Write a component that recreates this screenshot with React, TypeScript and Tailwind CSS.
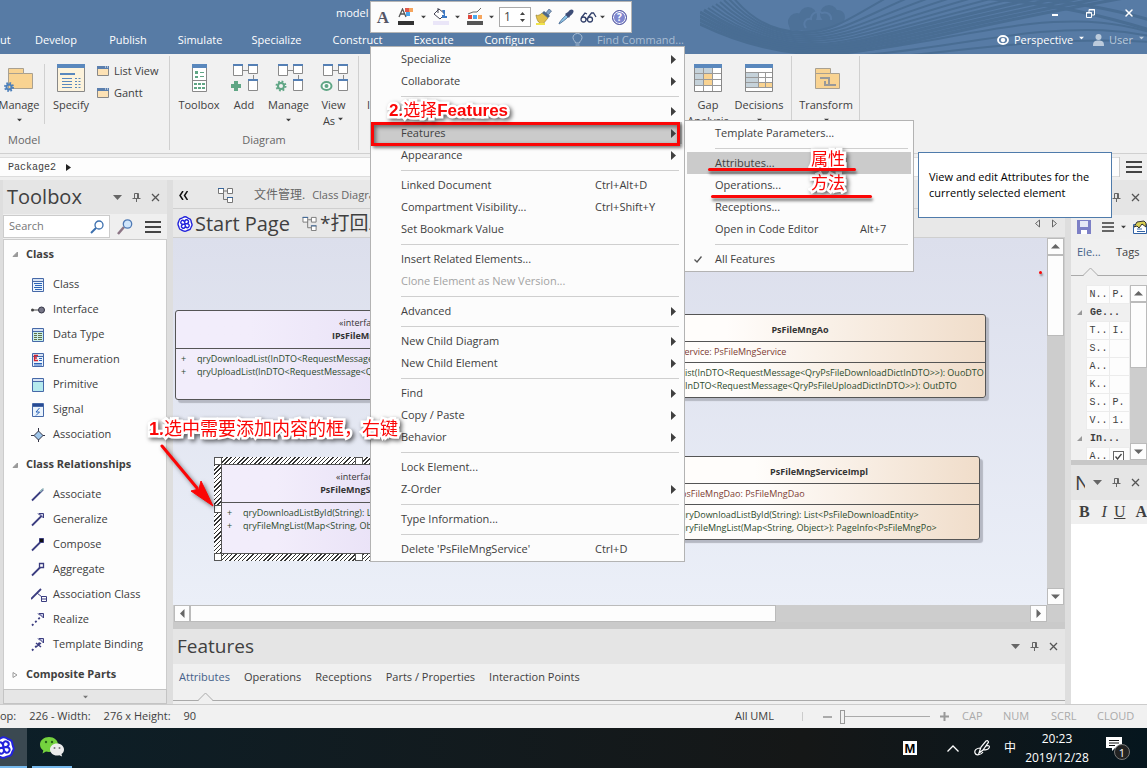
import type { ReactNode } from 'react';
import { X } from 'lucide-react';

type MenuEntry = { label: string; shortcut?: string; sub?: boolean; disabled?: boolean; active?: boolean; checked?: boolean } | 'sep';

const ribbonTabs = ['Develop', 'Publish', 'Simulate', 'Specialize', 'Construct', 'Execute', 'Configure'];

const contextMenu: MenuEntry[] = [
  { label: 'Specialize', sub: true },
  { label: 'Collaborate', sub: true },
  'sep',
  { label: '', sub: true },
  { label: 'Features', sub: true, active: true },
  { label: 'Appearance', sub: true },
  'sep',
  { label: 'Linked Document', shortcut: 'Ctrl+Alt+D' },
  { label: 'Compartment Visibility...', shortcut: 'Ctrl+Shift+Y' },
  { label: 'Set Bookmark Value' },
  'sep',
  { label: 'Insert Related Elements...' },
  { label: 'Clone Element as New Version...', disabled: true },
  'sep',
  { label: 'Advanced', sub: true },
  'sep',
  { label: 'New Child Diagram', sub: true },
  { label: 'New Child Element', sub: true },
  'sep',
  { label: 'Find', sub: true },
  { label: 'Copy / Paste', sub: true },
  { label: 'Behavior', sub: true },
  'sep',
  { label: 'Lock Element...' },
  { label: 'Z-Order', sub: true },
  'sep',
  { label: 'Type Information...' },
  'sep',
  { label: "Delete 'PsFileMngService'", shortcut: 'Ctrl+D' },
];

const featuresMenu: MenuEntry[] = [
  { label: 'Template Parameters...' },
  'sep',
  { label: 'Attributes...', active: true },
  { label: 'Operations...' },
  { label: 'Receptions...' },
  { label: 'Open in Code Editor', shortcut: 'Alt+7' },
  'sep',
  { label: 'All Features', checked: true },
];

const classItems = ['Class', 'Interface', 'Data Type', 'Enumeration', 'Primitive', 'Signal', 'Association'];
const relationItems = ['Associate', 'Generalize', 'Compose', 'Aggregate', 'Association Class', 'Realize', 'Template Binding'];
const featureTabs = ['Attributes', 'Operations', 'Receptions', 'Parts / Properties', 'Interaction Points'];

const propertyRows: Array<{ name: string; value?: string; group?: boolean; check?: boolean }> = [
  { name: 'N..', value: 'P.' },
  { name: 'Ge...', group: true },
  { name: 'T..', value: 'I.' },
  { name: 'S..' },
  { name: 'A..' },
  { name: 'K..' },
  { name: 'S..', value: 'P.' },
  { name: 'V..', value: '1.' },
  { name: 'In...', group: true },
  { name: 'A..', check: true },
];

function Caret({ className = '' }: { className?: string }) {
  return (
    <svg className={`h-[4px] w-[7px] shrink-0 ${className}`} viewBox="0 0 7 4" fill="currentColor">
      <path d="M0 0h7L3.5 4z" />
    </svg>
  );
}

function Burger() {
  return (
    <svg className="h-[12px] w-[16px]" viewBox="0 0 16 12" fill="#444">
      <path d="M0 0h16v2H0zM0 5h16v2H0zM0 10h16v2H0z" />
    </svg>
  );
}

function PanelButtons({ caret = true }: { caret?: boolean }) {
  return (
    <div className="flex items-center gap-[10px] text-[#555]">
      {caret && (
        <button type="button" aria-label="Panel options">
          <svg className="h-[5px] w-[9px]" viewBox="0 0 9 5" fill="#666">
            <path d="M0 0h9L4.5 5z" />
          </svg>
        </button>
      )}
      <button type="button" aria-label="Pin">
        <svg className="h-[9px] w-[9px]" viewBox="0 0 9 9" fill="none" stroke="#666">
          <path d="M2.5 5V.5h4V5M5.5.5V5M.5 5.5h8M4.5 6v3" />
        </svg>
      </button>
      <button type="button" aria-label="Close">
        <svg className="h-[9px] w-[9px]" viewBox="0 0 9 9" stroke="#555" strokeWidth="1.3">
          <path d="M1 1l7 7M8 1L1 8" />
        </svg>
      </button>
    </div>
  );
}

function Swirl() {
  const lines = Array.from({ length: 12 }, (_, i) => i);
  return (
    <svg className="pointer-events-none absolute right-0 top-0 h-[54px] w-[447px]" viewBox="700 0 447 54" fill="none" stroke="#496d93">
      <g fill="#4d7198" stroke="none">
        <circle cx="797" cy="22" r="9" />
        <circle cx="808" cy="16" r="9" />
        <circle cx="829" cy="14" r="9" />
        <path d="M788 20h40l14 0-10 8-20 3-22-1z" />
        <circle cx="838" cy="17" r="7" />
      </g>
      <path d="M806 28c-4-5 0-10 5-9 0-6 7-9 11-6 5-2 10 2 9 7" stroke="#577ba5" strokeWidth="2" />
      {lines.map((i) => (
        <path
          key={i}
          strokeWidth={i < 7 ? 2 : 3}
          d={`M${732 - i * 4} ${-4 + i * 2} C${748 - i * 2} ${16 + i * 2}, ${770} ${32 + i * 2}, ${802 + i * 2} ${32 + i * 2} S${850 + i * 9} ${18 + i}, ${888 + i * 22} -3`}
        />
      ))}
      <path strokeWidth="3" d="M975 -2c50 2 110 12 175 32M1020 -2c40 2 90 10 130 22" />
      <path strokeWidth="2" d="M820 54c70-2 150-24 210-30s90 0 120 8M850 56c70-4 140-20 190-24s80-2 110 4M900 56c70-6 150-20 250-14" />
    </svg>
  );
}

function DiagramIcon({ tool }: { tool?: 'add' | 'gear' | 'eye' }) {
  return (
    <svg className="h-[28px] w-[28px]" viewBox="0 0 28 28" fill="#fff" stroke="#8a8a8a">
      <path d="M12 6.5h6M23.5 11v5" fill="none" />
      <path d="M3.5 1.5h9v10h-9zM18.5 1.5h9v8h-9zM18.5 16.5h9v10h-9z" />
      <path d="M3 1h10M18 1h10M18 16h10" stroke="#5580b5" strokeWidth="2" />
      {tool === 'add' && <path d="M4 17h4v3h3v4H8v3H4v-3H1v-4h3z" fill="#60a685" stroke="none" />}
      {tool === 'gear' && (
        <>
          <circle cx="6" cy="22" r="3" fill="none" stroke="#60a685" strokeWidth="2" />
          <circle cx="6" cy="22" r="4.5" fill="none" stroke="#60a685" strokeWidth="2" strokeDasharray="1.8 1.73" />
        </>
      )}
      {tool === 'eye' && (
        <>
          <ellipse cx="6.5" cy="22" rx="5" ry="4" stroke="#60a685" strokeWidth="2" />
          <circle cx="6.5" cy="22" r="2" fill="#60a685" stroke="none" />
        </>
      )}
    </svg>
  );
}

function SmallDiagramIcon({ className }: { className: string }) {
  return (
    <svg className={className} viewBox="0 0 16 16" fill="#fff" stroke="#777">
      <path d="M6 4h4M5.5 6v6.5h5" fill="none" />
      <path d="M.5 1.5h5v5h-5zM9.5 1.5h5v5h-5zM9.5 10.500h5v5h-5z" />
      <path d="M0 1.5h6M9 10.500h6" stroke="#38659b" />
    </svg>
  );
}

function FolderIcon({ gear }: { gear?: boolean }) {
  return (
    <svg className="h-[28px] w-[30px]" viewBox="0 0 30 28" fill="#f9d391" stroke="#a9a090">
      <path d="M4.5 4.5h15v5h9v15h-24z" />
      <path d="M4.5 9.5h15" />
      {gear ? (
        <>
          <circle cx="5" cy="23" r="2.5" fill="none" stroke="#4d80bb" strokeWidth="2" />
          <circle cx="5" cy="23" r="4" fill="none" stroke="#4d80bb" strokeWidth="2" strokeDasharray="1.6 1.54" />
        </>
      ) : (
        <path d="M9 14h9v7h7M14 17v4h4M9 14v0" fill="none" stroke="#999" strokeWidth="2" />
      )}
    </svg>
  );
}

function SpecifyIcon() {
  return (
    <svg className="h-[28px] w-[28px]" viewBox="0 0 28 28">
      <path d="M.5.5h27v27H.5z" fill="#fdf3dc" stroke="#888" />
      <path d="M0 0h28v4H0z" fill="#5a88bd" />
      <path d="M3 10h15" stroke="#5a88bd" strokeWidth="2" />
      <path d="M5 14.5h10M5 17.5h10M5 20.5h10M5 23.5h10" stroke="#5a88bd" />
      <path d="M18 14.5h6M18 17.5h6M18 20.5h6M18 23.5h6" stroke="#5a88bd" strokeDasharray="2 1.5" />
    </svg>
  );
}

function ToolboxIcon() {
  return (
    <svg className="h-[28px] w-[15px]" viewBox="0 0 15 28">
      <path d="M.5.5h14v27H.5z" fill="#fff" stroke="#888" />
      <path d="M0 0h15v4H0z" fill="#5a88bd" />
      <path d="M0 16.5h15" stroke="#888" />
      <path d="M3 7h3v3H3zM3 12h3v2H3zM8 8h4v1H8zM8 12h4v1H8zM2 19h3v2H2zM6 19h3v2H6zM10 19h3v2h-3zM2 23h3v2H2zM6 23h3v2H6zM10 23h3v2h-3z" fill="#60a685" />
    </svg>
  );
}

function TableIcon({ decisions }: { decisions?: boolean }) {
  return (
    <svg className="h-[28px] w-[28px]" viewBox="0 0 28 28">
      <path d="M.5.5h27v27H.5z" fill="#fff" />
      {decisions ? (
        <path d="M1 9h13v14H1z" fill="#c5d2da" />
      ) : (
        <path d="M1 4h17v5H1zM1 9h9v12H1z" fill="#c5d2da" />
      )}
      <path d={decisions ? 'M14 18h13v5H14z' : 'M10 10h9v11h-9z'} fill="#f9d391" />
      <path
        d={decisions ? 'M0 8.5h28M0 13.5h28M0 18.5h28M0 23.5h28M13.5 9v14M20.5 9v14' : 'M0 9.5h28M0 15.5h28M0 21.5h28M9.5 4v24M18.5 4v24'}
        stroke="#999"
      />
      <path d="M.5.5h27v27H.5z" fill="none" stroke="#888" />
      <path d="M0 0h28v4H0z" fill="#5a88bd" />
    </svg>
  );
}

function SheetIcon() {
  return (
    <svg className="h-[10px] w-[12px]" viewBox="0 0 12 10">
      <path d="M.5.5h11v9H.5z" fill="#fde2b5" stroke="#888" />
      <path d="M0 0h12v3H0z" fill="#5b7fae" />
      <path d="M8 1h1M10 1h1" stroke="#fff" />
    </svg>
  );
}

function RibbonButton({ icon, label, second, caret, className }: { icon: ReactNode; label: string; second?: string; caret?: boolean; className: string }) {
  return (
    <button type="button" className={`flex shrink-0 flex-col items-center ${className}`}>
      <span className="flex h-[30px] items-start">{icon}</span>
      <span className="mt-[3px] leading-[16px]">{label}</span>
      <span className="flex h-[16px] items-center gap-[2px] leading-[16px]">
        {second}
        {caret && <Caret className={second ? 'mb-[4px] scale-75' : 'mb-[2px] scale-75'} />}
      </span>
    </button>
  );
}

function MiniToolbar() {
  return (
    <div className="absolute left-[370px] top-[1px] flex h-[32px] w-[262px] items-center border border-[#b5b5b5] bg-[#fcfcfc] pl-[2px] text-[#444]">
      <button type="button" className="w-[20px] font-['Liberation_Serif',serif] text-[17px] font-bold leading-none text-[#556]">A</button>
      <button type="button" aria-label="Font colour" className="ml-[5px]">
        <svg className="h-[18px] w-[17px]" viewBox="0 0 17 18">
          <path d="M1 9L4.5 1 8 9M2.500 6h4" fill="none" stroke="#555" strokeWidth="1.3" />
          <path d="M7 0h4v4H7z" fill="#e0584c" />
          <path d="M11 0h4v4h-4z" fill="#f6a55d" />
          <path d="M8 4h4v4H8z" fill="#4ba7ee" />
          <path d="M0 13h16v4H0z" fill="#333" />
        </svg>
      </button>
      <Caret className="ml-[5px] scale-75" />
      <button type="button" aria-label="Fill colour" className="ml-[6px]">
        <svg className="h-[18px] w-[17px]" viewBox="0 0 17 18">
          <path d="M6 1l6 5-5 5-6-5z" fill="#fff" stroke="#445" />
          <path d="M5 0v5" stroke="#445" />
          <path d="M9 2h3v6h2v2h-5V7h2z" fill="#3d79c4" />
          <path d="M0 13h16v4H0z" fill="#eae6f8" />
        </svg>
      </button>
      <Caret className="ml-[4px] scale-75" />
      <button type="button" aria-label="Line colour" className="ml-[6px]">
        <svg className="h-[18px] w-[17px]" viewBox="0 0 17 18">
          <path d="M1 6l5-2h4l4-4" fill="none" stroke="#666" />
          <path d="M1 7h4v4H1z" fill="#e0483c" />
          <path d="M6 7h4v4H6z" fill="#4ba7ee" />
          <path d="M11 7h4v4h-4z" fill="#f6a55d" />
          <path d="M0 13h16v4H0z" fill="#555" />
        </svg>
      </button>
      <Caret className="ml-[4px] scale-75" />
      <div className="ml-[4px] flex h-[20px] w-[32px] items-center border border-[#aaa] bg-white">
        <input aria-label="Line width" defaultValue="1" className="w-[19px] bg-transparent pl-[4px] text-[12px] outline-none" />
        <svg className="h-[12px] w-[7px]" viewBox="0 0 7 12" fill="#444">
          <path d="M1 4l2.500-3L6 4zM1 8l2.500 3L6 8z" />
        </svg>
      </div>
      <button type="button" aria-label="Copy style" className="ml-[4px]">
        <svg className="h-[16px] w-[17px]" viewBox="0 0 17 16">
          <path d="M10 5l4-5 2.500 2-4 5z" fill="#7fa0c4" stroke="#3d5478" strokeWidth=".6" />
          <path d="M1 6c2 1 4 0 6-2l6 5-5 6c-3 0-6-2-7-9z" fill="#e2c14b" stroke="#8f7a24" strokeWidth=".6" />
          <path d="M7 4l2-2 6 5-2 2z" fill="#4d6888" />
          <path d="M1 15h9" stroke="#efe34c" strokeWidth="2" />
        </svg>
      </button>
      <button type="button" aria-label="Pick style" className="ml-[6px]">
        <svg className="h-[16px] w-[16px]" viewBox="0 0 16 16">
          <path d="M1 15c0-2 6-8 7-9l2 2c-2 2-7 6-9 7z" fill="#8cc6e8" stroke="#57779e" />
          <path d="M7 5l4 4 1-2c4-3 4-5 3-6s-3-1-5 2z" fill="#3d4d77" />
        </svg>
      </button>
      <button type="button" aria-label="View options" className="ml-[6px]">
        <svg className="h-[12px] w-[17px]" viewBox="0 0 17 12" fill="none" stroke="#33416b" strokeWidth="1.3">
          <circle cx="3.5" cy="8.5" r="2.5" />
          <circle cx="10" cy="8.5" r="2.5" />
          <path d="M6 8h1.500M1.500 6.500L5 2l2 1M8 6.500L11.500 2h2L16 6" />
        </svg>
      </button>
      <Caret className="ml-[2px] scale-75" />
      <button type="button" aria-label="Help" className="ml-[6px] flex h-[15px] w-[15px] items-center justify-center rounded-full border border-[#4a4f9c] bg-[#7f87cf] text-[10px] font-bold leading-none text-white ring-1 ring-inset ring-white">
        ?
      </button>
    </div>
  );
}

function Menu({ items, className, shortcutCol }: { items: MenuEntry[]; className: string; shortcutCol: string }) {
  return (
    <div className={`absolute border border-[#b3b3b3] bg-[#fcfcfc] py-[1px] text-[#404040] ${className}`}>
      {items.map((item, i) =>
        item === 'sep' ? (
          <div key={i} className="flex h-[8px] items-center pl-[30px] pr-[5px]">
            <div className="h-px flex-1 bg-[#cfcfcf]" />
          </div>
        ) : (
          <button
            key={i}
            type="button"
            aria-label={item.label || 'Submenu'}
            disabled={item.disabled}
            className={`mx-[2px] flex h-[22px] w-[calc(100%-4px)] items-center pr-[4px] text-left ${item.active ? 'bg-[#cbcbcb]' : ''} ${item.disabled ? 'text-[#a3a3a3]' : ''}`}
          >
            <span className="flex w-[28px] shrink-0 pl-[7px]">
              {item.checked && (
                <svg className="h-[7px] w-[8px]" viewBox="0 0 8 7" fill="none" stroke="#555" strokeWidth="1.3">
                  <path d="M.5 3.500L3 6l4.500-5.500" />
                </svg>
              )}
            </span>
            <span className="flex-1 whitespace-nowrap">{item.label}</span>
            {item.shortcut && <span className={shortcutCol}>{item.shortcut}</span>}
            {item.sub && (
              <svg className="mr-[2px] h-[9px] w-[5px]" viewBox="0 0 5 9" fill="#404040">
                <path d="M0 0l5 4.500L0 9z" />
              </svg>
            )}
          </button>
        ),
      )}
    </div>
  );
}

function ClassIcon({ name }: { name: string }) {
  if (name === 'Interface') {
    return (
      <svg className="h-[14px] w-[14px]" viewBox="0 0 14 14">
        <circle cx="1.5" cy="7" r="1.500" fill="#444" />
        <path d="M2 7h6" stroke="#444" />
        <circle cx="10.5" cy="7" r="3" fill="#778" stroke="#334" />
      </svg>
    );
  }
  if (name === 'Association') {
    return (
      <svg className="h-[14px] w-[14px]" viewBox="0 0 14 14">
        <path d="M0 7.500h14M7.500 0v14" stroke="#334" />
        <path d="M7.500 3L12 7.500 7.500 12 3 7.500z" fill="#9fc6ea" stroke="#334" />
      </svg>
    );
  }
  const fill = name === 'Primitive' ? '#b5eaee' : name === 'Data Type' ? '#c9efe9' : '#eaf3fc';
  return (
    <svg className="h-[14px] w-[14px]" viewBox="0 0 14 14">
      <path d="M1.500.5h11v13h-11z" fill={fill} stroke="#4669a8" />
      <path d="M2 1h10v2H2z" fill={name === 'Signal' ? '#274a94' : '#d7e3f4'} />
      <path d="M2 3.500h10" stroke="#4669a8" />
      {name === 'Class' && <path d="M3 5.500h8M4 7.500h7M3 9.500h8M4 11.500h7" stroke="#2c64b8" />}
      {name === 'Data Type' && <path d="M3 5.500h3M7 5.500h4M3 7.500h3M7 7.500h4M3 9.500h3M7 9.500h4M3 11.500h3M7 11.500h4" stroke="#5f7048" />}
      {name === 'Enumeration' && (
        <>
          <path d="M7 2.500H3.500v5H7M3.500 5H6" fill="none" stroke="#d2232f" strokeWidth="1.3" />
          <path d="M8 5.500h3M8 7.500h3M3 10.500h8M3 12h8" stroke="#2c64b8" />
        </>
      )}
      {name === 'Signal' && <path d="M8.500 5L5 9h3.500L5 12.500" fill="none" stroke="#2c64b8" />}
    </svg>
  );
}

function RelationIcon({ name }: { name: string }) {
  const dashed = name === 'Realize' || name === 'Template Binding';
  return (
    <svg className="h-[15px] w-[16px]" viewBox="0 0 16 15" fill="none" stroke="#3b3d80">
      <path d={name === 'Association Class' ? 'M0 12L10 2' : 'M1 13.500L12 2.500'} strokeWidth="1.8" strokeDasharray={dashed ? '2 2.500' : undefined} />
      {(name === 'Generalize' || dashed) && <path d="M8 1.500h4.500V6zM7 1.500l2 2" fill="#c9cbe6" />}
      {name === 'Compose' && <path d="M8.500 1.500h4v4h-4z" fill="#111" />}
      {name === 'Aggregate' && <path d="M8.500 1.500h4v4h-4z" fill="#fff" strokeWidth="1.3" />}
      {name === 'Associate' && <path d="M9 5l3.500-3.500" stroke="#8db4b8" strokeWidth="1.5" />}
      {name === 'Association Class' && <path d="M6 6l5 4M10.500 9.500h5v5h-5zM11 12h4" />}
      {name === 'Template Binding' && <path d="M5 6l5 4M10 6l-5 4" strokeWidth="1.5" />}
    </svg>
  );
}

function ToolGroup({ title, items, headerClass }: { title: string; items: string[]; headerClass: string }) {
  return (
    <section>
      <h3 className={`flex items-center pl-[8px] font-bold ${headerClass}`}>
        <svg className="mr-[8px] h-[6px] w-[6px]" viewBox="0 0 6 6" fill={items.length ? '#999' : 'none'} stroke="#999">
          <path d={items.length ? 'M5.500 1v4.500H1z' : 'M1 .5L5 3 1 5.500z'} />
        </svg>
        {title}
      </h3>
      <ul>
        {items.map((item) => (
          <li key={item}>
            <button type="button" className="flex h-[25px] w-full items-center pl-[27px] text-left">
              <span className="flex w-[22px] shrink-0">{title === 'Class' ? <ClassIcon name={item} /> : <RelationIcon name={item} />}</span>
              {item}
            </button>
          </li>
        ))}
      </ul>
    </section>
  );
}

function Toolbox() {
  return (
    <aside className="flex w-[164px] shrink-0 flex-col bg-[#e5e5e5]">
      <header className="flex h-[34px] items-center justify-between pl-[4px] pr-[7px]">
        <h2 className="text-[20px] leading-none">Toolbox</h2>
        <PanelButtons />
      </header>
      <div className="flex h-[25px] items-center bg-[#efefef]">
        <label className="flex h-[23px] w-[107px] items-center border border-[#ccc] bg-white px-[5px]">
          <input type="search" aria-label="Search tools" placeholder="Search" className="w-0 flex-1 bg-transparent outline-none placeholder:text-[#777]" />
          <svg className="h-[14px] w-[14px]" viewBox="0 0 14 14" fill="none" stroke="#3c6fae">
            <circle cx="9" cy="5" r="4" strokeWidth="1.3" />
            <path d="M6 8l-5 5" strokeWidth="2" />
          </svg>
        </label>
        <button type="button" aria-label="Find toolbox item" className="ml-[7px]">
          <svg className="h-[16px] w-[16px]" viewBox="0 0 16 16" fill="none">
            <path d="M7 8l-6 7" stroke="#8c7585" strokeWidth="2.5" />
            <circle cx="10.5" cy="5" r="4.2" fill="#cfe5fb" stroke="#4f7ab5" strokeWidth="1.3" />
          </svg>
        </button>
        <button type="button" aria-label="Toolbox menu" className="ml-[12px]"><Burger /></button>
      </div>
      <div className="flex-1 border-x border-t border-[#ccc] bg-[#fdfdfd]">
        <ToolGroup title="Class" items={classItems} headerClass="h-[32px] pb-[4px]" />
        <ToolGroup title="Class Relationships" items={relationItems} headerClass="h-[35px]" />
        <ToolGroup title="Composite Parts" items={[]} headerClass="h-[32px] pt-[3px]" />
      </div>
      <button type="button" aria-label="Scroll down" className="flex h-[15px] items-center justify-center border border-[#c4c4c4] bg-[#e6e6e6] text-[#777]">
        <Caret className="scale-75" />
      </button>
    </aside>
  );
}

function InterfaceNode({ name, ops, className }: { name: string; ops: string[]; className: string }) {
  return (
    <div className={`absolute h-[90px] overflow-hidden border border-[#555] bg-gradient-to-r from-[#f2edfb] from-20% to-[#e0d6f2] text-[9px] leading-[13px] text-[#333] ${className}`}>
      <div className="flex h-[38px] flex-col items-center justify-end border-b border-[#555] pb-[6px]">
        <span>«interface»</span>
        <span className="font-bold">{name}</span>
      </div>
      <div className="pt-[3px] text-[#2c4a2c]">
        {ops.map((op) => (
          <div key={op} className="flex whitespace-nowrap">
            <span className="w-[21px] shrink-0 pl-[5px]">+</span>
            {op}
          </div>
        ))}
      </div>
    </div>
  );
}

function ClassNode({ name, attr, ops, className, opsClass }: { name: string; attr: string; ops: string[]; className: string; opsClass: string }) {
  return (
    <div className={`absolute h-[84px] rounded-[3px] border border-[#555] bg-gradient-to-r from-[#fffdfb] from-30% to-[#f0ddca] text-[9px] leading-[13px] shadow-[3px_3px_1px_#b5b8c3] ${className}`}>
      <div className="flex h-[27px] items-center justify-center border-b border-[#555] pt-[2px] font-bold text-[#333]">{name}</div>
      <div className="flex h-[21px] items-center whitespace-nowrap border-b border-[#555] pb-[2px] pl-[22px] text-[#7d3c33]">{attr}</div>
      <div className={`whitespace-nowrap pt-[3px] text-[#2c4a2c] ${opsClass}`}>
        {ops.map((op) => (
          <div key={op}>{op}</div>
        ))}
      </div>
    </div>
  );
}

function ScrollButton({ d, label, className }: { d: string; label: string; className: string }) {
  return (
    <button type="button" aria-label={label} className={`flex shrink-0 items-center justify-center border border-[#bbb] bg-[#fdfdfd] ${className}`}>
      <svg className="h-[9px] w-[9px]" viewBox="0 0 9 9" fill="#666">
        <path d={d} />
      </svg>
    </button>
  );
}

function SpiralLogo({ className }: { className: string }) {
  return (
    <svg className={className} viewBox="0 0 16 16" fill="#fff" stroke="#2222dc" strokeWidth="1.4">
      <path d="M8 .8c2 0 2.500 1.200 3.500 1.500s2.300.7 2.500 2.200.2 1.800.9 3.500-.7 2.300-.9 3.500-1 2.300-2.500 2.500-1.800 1.200-3.500 1.200-2.300-.9-3.500-1.200S2.200 13 2 11.500 1 9.500 1 8s.8-2.300 1-3.500S3 2.600 4.500 2.300 6.300.8 8 .8z" />
      <path d="M8 8C5 9 3 7.500 4 5.500S8 4 8 8zM8 8c-1-3 .5-5 2.500-4S12 8 8 8zM8 8c3-1 5 .5 4 2.500S8 12 8 8zM8 8c1 3-.5 5-2.500 4S4 8 8 8z" fill="none" />
    </svg>
  );
}

function Handle({ className }: { className: string }) {
  return <span className={`absolute h-[8px] w-[8px] border border-[#555] bg-white ${className}`} />;
}

function DiagramArea() {
  return (
    <main className="flex min-w-0 flex-1 flex-col">
      <div className="flex h-[28px] items-center bg-[#e8e8e8] pl-[6px] pt-[2px] text-[#666]">
        <svg className="h-[9px] w-[9px]" viewBox="0 0 9 9" fill="none" stroke="#111" strokeWidth="1.5">
          <path d="M4 0L1 4.500 4 9M8.500 0l-3 4.500 3 4.500" />
        </svg>
        <SmallDiagramIcon className="ml-[30px] h-[16px] w-[16px]" />
        <span className="ml-[20px] whitespace-nowrap text-[12px]">文件管理.</span>
        <span className="ml-[7px] whitespace-nowrap">Class Diagram</span>
      </div>
      <div className="flex h-[30px] items-center border-y border-[#cfcfcf] bg-[#e8e8e8] pl-[4px] pr-[7px] pt-[1px]">
        <SpiralLogo className="h-[16px] w-[16px] shrink-0" />
        <span className="ml-[2px] whitespace-nowrap text-[20px] leading-none">Start Page</span>
        <SmallDiagramIcon className="ml-[12px] h-[15px] w-[16px] shrink-0" />
        <span className="ml-[2px] flex-1 whitespace-nowrap text-[19px] leading-none">*打回工</span>
        <svg className="h-[9px] w-[24px]" viewBox="0 0 24 9" fill="none" stroke="#666">
          <path d="M5.500 1v7L1.500 4.500zM18.500 1v7l4-3.500z" />
        </svg>
      </div>
      <div className="flex flex-1">
        <div className="relative flex-1 overflow-hidden bg-gradient-to-b from-[#dcdfec] to-[#ebeff8]">
          <InterfaceNode
            className="left-[2px] top-[72px] w-[374px] rounded-[3px] shadow-[3px_3px_1px_#b5b8c3]"
            name="IPsFileMngAo"
            ops={['qryDownloadList(InDTO<RequestMessage<QryPsFileDownloadDictInDTO>>)', 'qryUploadList(InDTO<RequestMessage<QryPsFileUploadDictInDTO>>)']}
          />
          <div className="absolute left-[41px] top-[219px] h-[104px] w-[290px] bg-[repeating-linear-gradient(135deg,#333_0_1px,#fff_1px_3px)]">
            <InterfaceNode
              className="left-[7px] top-[7px] w-[276px]"
              name="PsFileMngService"
              ops={['qryDownloadListById(String): List<PsFileDownloadEntity>', 'qryFileMngList(Map<String, Object>): PageInfo<PsFileMngPo>']}
            />
            <Handle className="left-0 top-0" />
            <Handle className="left-[141px] top-0" />
            <Handle className="left-0 top-[48px]" />
            <Handle className="bottom-0 left-0" />
            <Handle className="bottom-0 left-[141px]" />
          </div>
          <ClassNode
            className="left-[441px] top-[76px] w-[372px]"
            opsClass="pl-[9px]"
            name="PsFileMngAo"
            attr="psFileMngService: PsFileMngService"
            ops={['qryDownloadList(InDTO<RequestMessage<QryPsFileDownloadDictInDTO>>): OuoDTO', 'qryUploadList(InDTO<RequestMessage<QryPsFileUploadDictInDTO>>): OutDTO']}
          />
          <ClassNode
            className="left-[485px] top-[218px] w-[322px]"
            opsClass="pl-[21px]"
            name="PsFileMngServiceImpl"
            attr="psFileMngDao: PsFileMngDao"
            ops={['qryDownloadListById(String): List<PsFileDownloadEntity>', 'qryFileMngList(Map<String, Object>): PageInfo<PsFileMngPo>']}
          />
        </div>
        <div className="flex w-[18px] shrink-0 flex-col bg-[#cdcdcd] pr-px">
          <ScrollButton label="Scroll up" className="h-[17px]" d="M0 6.500L4.500 2 9 6.500z" />
          <div className="h-[81px] border border-[#bbb] bg-[#fdfdfd]" />
          <div className="flex-1" />
          <ScrollButton label="Scroll down" className="h-[17px]" d="M0 2.500h9L4.500 7z" />
        </div>
      </div>
      <div className="flex h-[17px] bg-[#cdcdcd] pl-px pr-[18px]">
        <ScrollButton label="Scroll left" className="w-[16px]" d="M6.500 0v9L2 4.500z" />
        <div className="w-[586px] border border-[#bbb] bg-[#fdfdfd]" />
        <div className="flex-1" />
        <ScrollButton label="Scroll right" className="w-[17px]" d="M2.500 0v9L7 4.500z" />
      </div>
      <div className="h-[7px] bg-[#cacaca]" />
      <section className="bg-[#f0f0f0]">
        <header className="flex h-[35px] items-center justify-between bg-[#e5e5e5] pl-[4px] pr-[7px]">
          <h2 className="text-[19px] leading-none">Features</h2>
          <PanelButtons />
        </header>
        <nav className="relative flex h-[37px] gap-[14px] border-b border-[#aaa] pl-[6px] pt-[5px]">
          {featureTabs.map((tab, i) => (
            <button key={tab} type="button" className={`h-[16px] whitespace-nowrap ${i === 0 ? 'text-[#44618a]' : ''}`}>
              {tab}
            </button>
          ))}
          <TabNotch className="left-[24px]" />
        </nav>
        <div className="h-[3px]" />
      </section>
    </main>
  );
}

function TabNotch({ className }: { className: string }) {
  return (
    <svg className={`absolute -bottom-px h-[9px] w-[17px] ${className}`} viewBox="0 0 17 9" fill="#f0f0f0" stroke="#aaa">
      <path d="M0 8.500h1L8.500 1 16 8.500h1" />
      <path d="M2 8.500h13" stroke="#f0f0f0" />
    </svg>
  );
}

function PropertiesPanel() {
  return (
    <aside className="flex w-[76px] shrink-0 flex-col overflow-hidden bg-white">
      <header className="flex h-[35px] items-center justify-end bg-[#e5e5e5] pr-[7px]">
        <PanelButtons caret={false} />
      </header>
      <div className="flex h-[24px] items-center bg-[#efefef] pl-[6px]">
        <svg className="h-[14px] w-[14px] shrink-0" viewBox="0 0 14 14">
          <path d="M0 0h14v14H0z" fill="#7d80c6" />
          <path d="M3 1h8v6H3z" fill="#e6e8f6" />
          <path d="M4 10h6v4H4z" fill="#fff" />
        </svg>
        <svg className="ml-[11px] h-[11px] w-[12px] shrink-0" viewBox="0 0 12 11" fill="#666">
          <path d="M0 0h12v2H0zM0 4h12v2H0zM0 8h12v2H0z" />
        </svg>
        <Caret className="ml-[6px] shrink-0 scale-75" />
        <svg className="ml-[6px] h-[14px] w-[14px] shrink-0" viewBox="0 0 14 14">
          <path d="M.5 4.500h13v9H.5z" fill="#fff" stroke="#3363a5" />
          <path d="M4 9h5M4 11.500h8" stroke="#3363a5" />
          <path d="M1 7L4 2l7-1 2 2v4L9 4 6 8 4 6z" fill="#d8ce52" stroke="#333" />
        </svg>
      </div>
      <div className="relative flex h-[37px] gap-[14px] border-b border-[#aaa] bg-[#f0f0f0] pl-[6px] pt-[5px]">
        <button type="button" className="h-[16px] w-[25px] text-left text-[#44618a]">Ele...</button>
        <button type="button" className="h-[16px]">Tags</button>
        <TabNotch className="left-[11px]" />
      </div>
      <div className="flex h-[184px] overflow-hidden bg-[#f0f0f0] pt-[9px]">
        <table className="w-[59px] shrink-0 table-fixed border-collapse self-start font-['Liberation_Mono',monospace] text-[10px]">
          <tbody>
            {propertyRows.map((row, i) => (
              <tr key={i} className="h-[18px]">
                <td className="w-[15px] p-0">
                  {row.group && (
                    <svg className="ml-[6px] h-[5px] w-[5px]" viewBox="0 0 5 5" fill="#999">
                      <path d="M5 0v5H0z" />
                    </svg>
                  )}
                </td>
                {row.group ? (
                  <td colSpan={2} className="p-0 pl-[4px] font-bold">{row.name}</td>
                ) : (
                  <>
                    <td className="w-[23px] border border-[#ececec] bg-[#fdfdfd] p-0 pl-[3px]">{row.name}</td>
                    <td className="border border-[#ececec] bg-[#fdfdfd] p-0 pl-[3px]">
                      {row.check ? (
                        <span className="relative block h-[11px] w-[11px]">
                          <input type="checkbox" aria-label="Active" defaultChecked className="block h-[11px] w-[11px] appearance-none border border-[#666] bg-white" />
                          <svg className="pointer-events-none absolute inset-0 h-[11px] w-[11px]" viewBox="0 0 11 11" fill="none" stroke="#444" strokeWidth="1.3">
                            <path d="M2.500 5.500l2 2.500 4-5" />
                          </svg>
                        </span>
                      ) : (
                        row.value
                      )}
                    </td>
                  </>
                )}
              </tr>
            ))}
          </tbody>
        </table>
        <div className="flex w-[17px] shrink-0 flex-col bg-[#cdcdcd]">
          <ScrollButton label="Scroll up" className="h-[17px]" d="M0 6.500L4.500 2 9 6.500z" />
          <div className="h-[66px] border border-[#bbb] bg-[#fdfdfd]" />
          <div className="flex-1" />
          <ScrollButton label="Scroll down" className="h-[17px]" d="M0 2.500h9L4.500 7z" />
        </div>
      </div>
      <div className="h-[5px] shrink-0 bg-[#c8c8c8]" />
      <header className="flex h-[35px] shrink-0 items-center justify-between bg-[#e5e5e5] pl-[4px] pr-[7px]">
        <h2 className="w-[10px] overflow-hidden text-[20px] leading-none">N</h2>
        <PanelButtons />
      </header>
      <div className="flex h-[24px] shrink-0 items-center bg-[#efefef] font-['Liberation_Serif',serif] text-[16px]">
        <button type="button" className="ml-[8px] w-[24px] text-left font-bold">B</button>
        <button type="button" className="w-[18px] pl-[3px] text-left italic">I</button>
        <button type="button" className="underline">U</button>
        <button type="button" className="ml-[10px] font-bold">A</button>
      </div>
    </aside>
  );
}

function StatusBar() {
  return (
    <footer className="flex h-[24px] items-center border-t border-[#ccc] bg-[#f1f1f1]">
      <div className="flex flex-1 gap-[13px] whitespace-nowrap">
        <span>op:</span>
        <span>226 - Width:</span>
        <span>276 x Height:</span>
        <span>90</span>
      </div>
      <span className="mr-[28px]">All UML</span>
      <span className="mr-[20px] h-[9px] w-px bg-[#ccc]" />
      <button type="button" aria-label="Zoom out" className="mr-[8px] h-[2px] w-[9px] bg-[#aaa]" />
      <input
        type="range"
        aria-label="Zoom"
        defaultValue="0"
        className="h-[14px] w-[90px] appearance-none bg-[linear-gradient(#aaa,#aaa)] bg-[length:100%_1px] bg-center bg-no-repeat [&::-webkit-slider-thumb]:h-[14px] [&::-webkit-slider-thumb]:w-[5px] [&::-webkit-slider-thumb]:appearance-none [&::-webkit-slider-thumb]:border [&::-webkit-slider-thumb]:border-[#999] [&::-webkit-slider-thumb]:bg-[#f1f1f1]"
      />
      <button type="button" aria-label="Zoom in" className="ml-[10px]">
        <svg className="h-[9px] w-[9px]" viewBox="0 0 9 9" stroke="#999" strokeWidth="2">
          <path d="M0 4.500h9M4.500 0v9" />
        </svg>
      </button>
      <div className="ml-[13px] flex text-[#aaa]">
        <span className="w-[41px]">CAP</span>
        <span className="w-[48px]">NUM</span>
        <span className="w-[46px]">SCRL</span>
        <span className="w-[50px]">CLOUD</span>
      </div>
    </footer>
  );
}

function Taskbar() {
  return (
    <div className="flex h-[40px] items-center bg-gradient-to-r from-[#0c1f28] via-[#151717] via-70% to-[#06161e] text-[12px] text-white">
      <button type="button" aria-label="Enterprise Architect" className="flex h-full w-[27px] items-center overflow-hidden border-b-2 border-[#76b9ed] bg-[#3b4951]">
        <SpiralLogo className="-ml-[8px] h-[23px] w-[23px] shrink-0" />
      </button>
      <button type="button" aria-label="WeChat" className="ml-[5px] flex h-full w-[40px] items-center justify-center border-b-2 border-[#76b9ed]">
        <svg className="h-[20px] w-[24px]" viewBox="0 0 24 20">
          <path d="M9 0c5 0 9 3.300 9 7.500S14 15 9 15c-1 0-2-.2-3-.5L2.500 16.500l.8-3C1.300 12 0 10 0 7.500 0 3.300 4 0 9 0z" fill="#74d23e" />
          <path d="M17 6.500c4 0 7 2.700 7 6 0 2-1 3.500-2.500 4.600l.6 2.400-2.800-1.300c-.7.2-1.500.3-2.300.3-4 0-7-2.700-7-6s3-6 7-6z" fill="#ececec" />
          <circle cx="6" cy="5" r="1.200" fill="#28651a" />
          <circle cx="12" cy="5" r="1.200" fill="#28651a" />
          <circle cx="14.5" cy="11" r="1" fill="#777" />
          <circle cx="19.5" cy="11" r="1" fill="#777" />
        </svg>
      </button>
      <div className="flex-1" />
      <span className="mr-[30px] flex h-[14px] w-[14px] items-center justify-center bg-white font-['Liberation_Sans',sans-serif] text-[13px] font-bold leading-none text-black">M</span>
      <svg className="mr-[15px] h-[7px] w-[12px]" viewBox="0 0 12 7" fill="none" stroke="#fff" strokeWidth="1.3">
        <path d="M.5 6.500L6 1l5.500 5.500" />
      </svg>
      <svg className="mr-[13px] h-[16px] w-[17px]" viewBox="0 0 17 16" fill="none" stroke="#fff" strokeWidth="1.2">
        <path d="M5 13l2-6 5-6c2-1 3 1 2 2L9 10zM6 8c-3 0-6 2-5 5s6 2 8-1M12 6c3-1 4 0 3 2s-4 2-6 2" />
      </svg>
      <span className="mr-[7px] w-[12px]">中</span>
      <div className="w-[68px] whitespace-nowrap text-center leading-[19px]">
        <div>20:23</div>
        <div>2019/12/28</div>
      </div>
      <div className="relative ml-[15px] mr-[17px] h-[24px] w-[24px]">
        <svg className="h-[16px] w-[16px]" viewBox="0 0 16 16">
          <path d="M0 1h16v11H9l-3 3v-3H0z" fill="#fff" />
          <path d="M3 4.500h10M3 7h10M3 9.500h6" stroke="#111" />
        </svg>
        <span className="absolute bottom-0 right-0 flex h-[16px] w-[16px] items-center justify-center rounded-full border border-[#777] bg-[#222] text-[11px] leading-none">1</span>
      </div>
    </div>
  );
}

function Note({ children, className }: { children: ReactNode; className: string }) {
  return (
    <span
      className={`absolute whitespace-nowrap font-['Liberation_Sans','Noto_Sans_CJK_SC',sans-serif] leading-[20px] text-[#fb0606] [-webkit-text-stroke:5px_white] [paint-order:stroke] [stroke-linejoin:round] drop-shadow-[2px_2px_2px_rgba(0,0,0,0.6)] ${className}`}
    >
      {children}
    </span>
  );
}

function Annotations() {
  return (
    <div className="pointer-events-none">
      <div className="absolute left-[371px] top-[122px] h-[24px] w-[309px] border-[3px] border-[#fb0606] shadow-[2px_2px_3px_rgba(0,0,0,0.5),inset_2px_2px_4px_rgba(0,0,0,0.5)]" />
      <Note className="left-[389px] top-[101px] text-[17px] font-bold">
        2.<span className="font-normal">选择</span>Features
      </Note>
      <Note className="left-[811px] top-[150px] text-[17px]">属性</Note>
      <Note className="left-[811px] top-[174px] text-[17px]">方法</Note>
      <Note className="left-[149px] top-[419px] text-[18px] font-bold">
        1.<span className="font-normal">选中需要添加内容的框，右键</span>
      </Note>
      <div className="absolute left-[708px] top-[168px] h-[3px] w-[148px] rounded bg-[#fb0606] shadow-[1px_3px_3px_rgba(0,0,0,0.5)]" />
      <div className="absolute left-[711px] top-[195px] h-[3px] w-[161px] rounded bg-[#fb0606] shadow-[1px_3px_3px_rgba(0,0,0,0.5)]" />
      <div className="absolute left-[1039px] top-[271px] h-[3px] w-[3px] rounded-full bg-[#fb0606] shadow-[1px_2px_2px_rgba(0,0,0,0.4)]" />
      <svg className="absolute left-[159px] top-[442px] h-[70px] w-[60px] drop-shadow-[2px_2px_2px_rgba(0,0,0,0.5)]" viewBox="0 0 60 70" fill="#fb0606">
        <path d="M3 4L38 46" stroke="#fb0606" strokeWidth="3" strokeLinecap="round" />
        <path d="M54 64L32 49l8-2 2-8z" stroke="#fb0606" />
      </svg>
    </div>
  );
}

export default function App() {
  return (
    <div className="relative flex min-h-screen flex-col overflow-hidden bg-[#dcdcdc] font-['Open_Sans','Noto_Sans_CJK_SC',sans-serif] text-[11px] text-[#404040]">
      <div className="relative h-[54px] bg-[#577ba5] text-white">
        <Swirl />
        <div className="relative flex h-[26px] items-center pl-[336px]">
          <span className="flex-1">model</span>
          <div className="flex items-center gap-[28px] pr-[12px]">
            <button type="button" aria-label="Minimize" className="mt-[4px] h-[2px] w-[6px] bg-white" />
            <button type="button" aria-label="Restore">
              <svg className="h-[9px] w-[9px]" viewBox="0 0 9 9" fill="none" stroke="#fff">
                <path d="M.5 3.500h5v5h-5zM3 3V.5h5.500V6H6M3 1h6M0 4h6" />
              </svg>
            </button>
            <button type="button" aria-label="Close window">
              <X className="h-[12px] w-[12px]" strokeWidth={3} />
            </button>
          </div>
        </div>
        <div className="relative flex h-[28px] items-center">
          <nav className="flex items-center">
            <button type="button" className="w-[20px] text-left">ut</button>
            {ribbonTabs.map((tab) => (
              <button key={tab} type="button" className={tab.length > 8 ? 'w-[81px]' : tab === 'Execute' ? 'w-[71px]' : 'w-[72px]'}>
                {tab}
              </button>
            ))}
          </nav>
          <label className="ml-[22px] flex flex-1 items-center text-[#a9bdd3]">
            <svg className="mr-[14px] h-[14px] w-[11px] shrink-0" viewBox="0 0 11 14" fill="none" stroke="currentColor">
              <path d="M3.500 10C3.500 8 1 7.500 1 4.500a4.500 4 0 019 0c0 3-2.500 3.500-2.500 5.500zM3.500 12h4M4 13.500h3" />
            </svg>
            <input aria-label="Find command" placeholder="Find Command..." className="w-[110px] bg-transparent outline-none placeholder:text-[#a9bdd3]" />
          </label>
          <button type="button" className="flex items-center gap-[5px]">
            <svg className="h-[10px] w-[12px]" viewBox="0 0 12 10" fill="none" stroke="#fff">
              <ellipse cx="6" cy="5" rx="5" ry="4" strokeWidth="1.8" />
              <circle cx="6" cy="5" r="1.8" fill="#fff" />
            </svg>
            Perspective
            <Caret className="mb-[4px] scale-75" />
          </button>
          <button type="button" className="ml-[8px] mr-[2px] flex items-center gap-[5px] text-[#bccbdc]">
            <svg className="h-[12px] w-[11px]" viewBox="0 0 11 12" fill="currentColor">
              <circle cx="5.5" cy="3" r="3" />
              <path d="M0 12c0-5 2-5.500 5.500-5.500S11 7 11 12z" />
            </svg>
            User
            <Caret className="mb-[4px] scale-75" />
          </button>
        </div>
      </div>

      <div className="flex h-[100px] overflow-hidden border-b border-[#d0d0d0] bg-[#f1f1f1] pb-[3px] pt-[2px]">
        <div className="flex w-[170px] shrink-0 flex-col border-r border-[#d0d0d0] pt-[8px]">
          <div className="flex">
            <RibbonButton className="-ml-[6px] w-[50px]" icon={<FolderIcon gear />} label="Manage" caret />
            <div className="h-[60px] w-px bg-[#d0d0d0]" />
            <RibbonButton className="w-[52px]" icon={<SpecifyIcon />} label="Specify" />
            <div className="flex flex-col">
              <button type="button" className="flex h-[14px] items-center gap-[5px] whitespace-nowrap"><SheetIcon />List View</button>
              <button type="button" className="mt-[8px] flex h-[14px] items-center gap-[5px]"><SheetIcon />Gantt</button>
            </div>
          </div>
          <span className="mt-[3px] pl-[8px] leading-[16px] text-[#666]">Model</span>
        </div>
        <div className="flex w-[189px] shrink-0 flex-col border-r border-[#d0d0d0] pt-[8px]">
          <div className="flex pl-[4px]">
            <RibbonButton className="w-[50px]" icon={<ToolboxIcon />} label="Toolbox" />
            <RibbonButton className="w-[40px]" icon={<DiagramIcon tool="add" />} label="Add" />
            <RibbonButton className="w-[49px]" icon={<DiagramIcon tool="gear" />} label="Manage" caret />
            <RibbonButton className="w-[41px]" icon={<DiagramIcon tool="eye" />} label="View" second="As" caret />
          </div>
          <span className="mt-[3px] text-center leading-[16px] text-[#666]">Diagram</span>
        </div>
        <div className="w-[325px] shrink-0 pl-[8px] pt-[41px] leading-[16px]">I</div>
        <div className="flex w-[108px] shrink-0 border-r border-[#d0d0d0] pt-[8px]">
          <RibbonButton className="w-[48px]" icon={<TableIcon />} label="Gap" second="Analysis" />
          <RibbonButton className="w-[54px]" icon={<TableIcon decisions />} label="Decisions" caret />
        </div>
        <div className="flex w-[68px] shrink-0 border-r border-[#d0d0d0] pt-[8px]">
          <RibbonButton className="w-[68px]" icon={<FolderIcon />} label="Transform" caret />
        </div>
      </div>

      <div className="flex h-[26px] items-center bg-[#efefef] py-[3px]">
        <div className="flex h-full flex-1 items-center gap-[10px] border-y border-[#ddd] bg-[#fdfdfd] pl-[8px] font-['Liberation_Mono',monospace] text-[10px]">
          Package2
          <svg className="h-[7px] w-[5px]" viewBox="0 0 5 7" fill="#222">
            <path d="M0 0l5 3.500L0 7z" />
          </svg>
        </div>
        <button type="button" aria-label="Navigation menu" className="flex h-[20px] w-[28px] items-center justify-center border-l border-[#ccc]">
          <Burger />
        </button>
      </div>

      <div className="flex flex-1 gap-[6px] bg-[#dedede] pl-[3px]">
        <Toolbox />
        <DiagramArea />
        <PropertiesPanel />
      </div>

      <StatusBar />
      <Taskbar />

      <MiniToolbar />
      <Menu items={contextMenu} className="left-[370px] top-[46px] w-[315px]" shortcutCol="w-[83px]" />
      <Menu items={featuresMenu} className="left-[684px] top-[120px] w-[230px]" shortcutCol="w-[47px]" />
      <div role="tooltip" className="absolute left-[918px] top-[152px] w-[194px] border border-[#4f7bab] bg-white px-[10px] py-[16px] leading-[16px] text-black">
        View and edit Attributes for the currently selected element
      </div>
      <Annotations />
    </div>
  );
}
